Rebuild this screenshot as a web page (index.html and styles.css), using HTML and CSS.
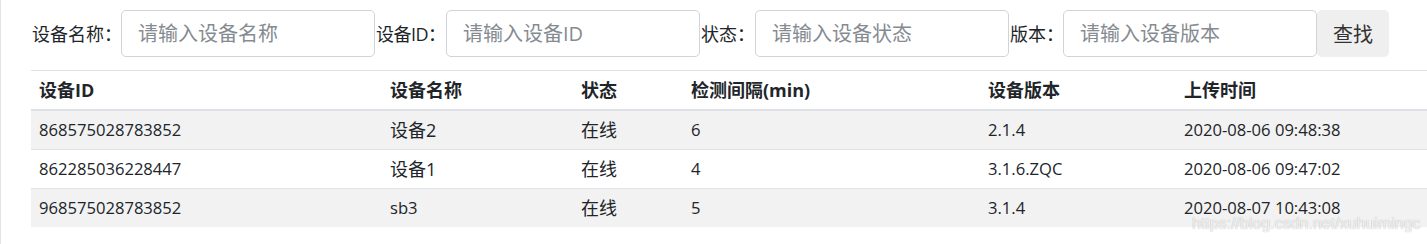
FILE: index.html
```html
<!DOCTYPE html>
<html lang="zh-CN">
<head>
<meta charset="utf-8">
<title>设备列表</title>
<link rel="stylesheet" href="styles.css">
</head>
<body>
<div class="page">
  <form class="search">
    <label class="search-label label-name">设备名称：</label>
    <input class="search-input" type="text" placeholder="请输入设备名称">
    <label class="search-label label-id">设备ID：</label>
    <input class="search-input" type="text" placeholder="请输入设备ID">
    <label class="search-label label-state">状态：</label>
    <input class="search-input" type="text" placeholder="请输入设备状态">
    <label class="search-label label-ver">版本：</label>
    <input class="search-input" type="text" placeholder="请输入设备版本">
    <button class="search-btn" type="button">查找</button>
  </form>
  <table class="device-table">
    <colgroup>
      <col class="c1"><col class="c2"><col class="c3"><col class="c4"><col class="c5"><col class="c6">
    </colgroup>
    <thead>
      <tr><th>设备ID</th><th>设备名称</th><th>状态</th><th>检测间隔(min)</th><th>设备版本</th><th>上传时间</th></tr>
    </thead>
    <tbody>
      <tr><td class="num">868575028783852</td><td>设备2</td><td>在线</td><td class="num">6</td><td class="num">2.1.4</td><td class="num">2020-08-06 09:48:38</td></tr>
      <tr><td class="num">862285036228447</td><td>设备1</td><td>在线</td><td class="num">4</td><td class="num">3.1.6.ZQC</td><td class="num">2020-08-06 09:47:02</td></tr>
      <tr><td class="num">968575028783852</td><td class="num">sb3</td><td>在线</td><td class="num">5</td><td class="num">3.1.4</td><td class="num">2020-08-07 10:43:08</td></tr>
    </tbody>
  </table>
  <div class="watermark">https://blog.csdn.net/xuhuimingc</div>
</div>
</body>
</html>
```
FILE: styles.css
```css
html, body {
  margin: 0;
  padding: 0;
  background: #fff;
}
body {
  width: 1427px;
  height: 244px;
  overflow: hidden;
  font-family: "Open Sans", "Noto Sans CJK SC", sans-serif;
  font-size: 18px;
  color: #212529;
}
.page {
  position: relative;
  height: 244px;
  box-sizing: border-box;
  border-left: 1px solid #e3e3e3;
  padding: 10px 0 0 30px;
}
.search {
  display: flex;
  align-items: center;
  height: 47px;
  margin: 0;
}
.search-label {
  flex: none;
  font-size: 18px;
  line-height: 22px;
  white-space: nowrap;
  margin-left: 1px;
  color: #212529;
}
.label-name { width: 89px; }
.label-id { width: 70px; letter-spacing: -0.5px; }
.label-state { width: 54px; }
.label-ver { width: 53px; }
.search-input {
  flex: none;
  box-sizing: border-box;
  width: 254px;
  height: 47px;
  margin: 0;
  padding: 0 16px;
  border: 1px solid #ced4da;
  border-radius: 5px;
  font-family: "Open Sans", "Noto Sans CJK SC", sans-serif;
  font-size: 20px;
  color: #495057;
  background: #fff;
  outline: none;
}
.search-input::placeholder {
  color: #858b91;
}
.search-btn {
  flex: none;
  box-sizing: border-box;
  height: 47px;
  width: 72px;
  margin: 0;
  padding: 0;
  border: none;
  border-radius: 5px;
  background: #efefef;
  font-family: "Open Sans", "Noto Sans CJK SC", sans-serif;
  font-size: 20px;
  color: #333;
}
.device-table {
  margin-top: 13px;
  width: 1396px;
  table-layout: fixed;
  border-collapse: separate;
  border-spacing: 0;
}
.c1 { width: 351px; }
.c2 { width: 191px; }
.c3 { width: 110px; }
.c4 { width: 297px; }
.c5 { width: 196px; }
.c6 { width: auto; }
.device-table th,
.device-table td {
  padding: 8px 8px;
  line-height: 22px;
  text-align: left;
  white-space: nowrap;
  vertical-align: middle;
}
.device-table th {
  font-weight: 700;
  border-top: 1px solid #dee2e6;
  border-bottom: 2px solid #dee2e6;
}
.device-table td {
  border-top: 1px solid #dee2e6;
}
.device-table tbody tr:first-child td {
  border-top: none;
}
.device-table tbody tr:nth-child(odd) td {
  background: #f2f2f2;
}
.device-table td.num {
  font-size: 16.6px;
}
.watermark {
  position: absolute;
  left: 1191px;
  top: 216px;
  font-family: "Liberation Sans", Arial, sans-serif;
  font-size: 16px;
  line-height: 16px;
  color: rgba(255, 255, 255, 0.85);
  text-shadow: 0 0 1px rgba(0, 0, 0, 0.35);
  white-space: nowrap;
}
```
